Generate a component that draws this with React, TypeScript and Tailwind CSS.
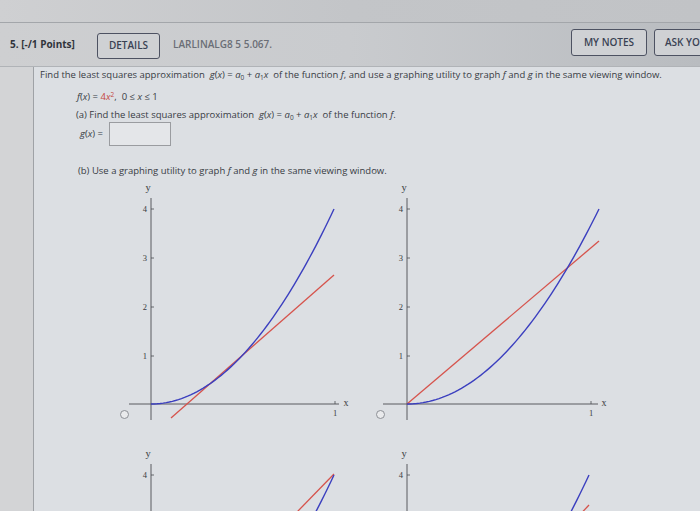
import React from "react";

type GraphProps = {
  x1: number;
  red: [number, number, number, number];
  axisEnd: number;
  axisStart: number;
  oneX: number;
  xLabelX: number;
  full?: boolean;
};

function Graph({ x1, red, axisEnd, axisStart, oneX, xLabelX, full = true }: GraphProps) {
  const pts: string[] = [];
  for (let i = 0; i <= 60; i++) {
    const v = i / 60;
    pts.push(`${(27 + (x1 - 27) * v).toFixed(2)},${(224 - 48.75 * 4 * v * v).toFixed(2)}`);
  }
  const allTicks = [
    { v: 4, y: 29 },
    { v: 3, y: 78 },
    { v: 2, y: 127 },
    { v: 1, y: 176 },
  ];
  const ticks = full ? allTicks : allTicks.slice(0, 1);
  const h = full ? 266 : 65;
  return (
    <div className={full ? "flex items-start w-[256px] h-[266px] shrink-0" : "flex items-start w-[256px] h-[65px] shrink-0"}>
      <div
        className={
          full
            ? "mt-[230px] ml-[6px] w-[9px] h-[9px] rounded-full border border-[#8d9096] bg-[#e9eaec] shrink-0"
            : "ml-[6px] w-[9px] h-[9px] shrink-0"
        }
      />
      <svg width="240" height={h} className="-ml-[5px] shrink-0" viewBox={`0 0 240 ${h}`}>
        <g fontFamily="'Liberation Serif', serif" fill="#3a3c40">
          <text x="24" y="11" fontSize="10.5" textAnchor="middle">y</text>
          {ticks.map((t) => (
            <text key={t.v} x="23" y={t.y + 3} fontSize="8.5" textAnchor="end">
              {t.v}
            </text>
          ))}
          {full && (
            <>
              <text x={oneX} y="236" fontSize="8.5" textAnchor="middle">1</text>
              <text x={xLabelX} y="226" fontSize="10" textAnchor="middle">x</text>
            </>
          )}
        </g>
        <line x1="27" y1="18" x2="27" y2="240" stroke="#4a4c50" strokeWidth="0.9" />
        {ticks.map((t) => (
          <line key={t.v} x1="27" y1={t.y} x2="30" y2={t.y} stroke="#4a4c50" strokeWidth="0.8" />
        ))}
        {full && (
          <>
            <line x1={axisStart} y1="224" x2={axisEnd} y2="224" stroke="#4a4c50" strokeWidth="0.9" />
            <line x1={oneX} y1="221" x2={oneX} y2="224" stroke="#4a4c50" strokeWidth="0.8" />
          </>
        )}
        <line x1={red[0]} y1={red[1]} x2={red[2]} y2={red[3]} stroke="#d6534c" strokeWidth="1.3" />
        <polyline points={pts.join(" ")} fill="none" stroke="#3b3fbf" strokeWidth="1.4" />
      </svg>
    </div>
  );
}

function Btn({ children, extra }: { children: React.ReactNode; extra: string }) {
  return (
    <div
      className={
        "flex items-center border border-[#4d5262] rounded-[3px] bg-[#cfd1d4] text-[#3a4253] font-semibold text-[10px] whitespace-nowrap overflow-hidden shrink-0 " +
        extra
      }
    >
      {children}
    </div>
  );
}

export default function App() {
  return (
    <div className="w-[700px] h-[511px] overflow-hidden bg-[#dcdfe3] font-['Open_Sans',sans-serif] text-[#383c44]">
      <div className="h-[23px] bg-linear-to-r from-[#cfd0d2] via-[#c3c5c8] to-[#c1c3c6] border-b border-[#a3a6aa]" />
      <div className="h-[44px] flex items-center bg-linear-to-r from-[#cecfd1] via-[#c9cbce] to-[#b9bcc0] border-b border-[#b0b3b7]">
        <div className="ml-[10px] w-[87px] font-bold text-[10px] text-[#30343b] whitespace-nowrap">5. [-/1 Points]</div>
        <Btn extra="w-[63px] h-[26px] mt-[2px] justify-center">DETAILS</Btn>
        <div className="ml-[13px] text-[10px] font-semibold text-[#6a6e76] whitespace-nowrap">LARLINALG8 5 5.067.</div>
        <div className="flex-1" />
        <Btn extra="w-[76px] h-[27px] -mt-[5px] justify-center">MY NOTES</Btn>
        <Btn extra="w-[60px] h-[27px] -mt-[5px] ml-[7px] -mr-[14px] justify-start pl-[10px]">ASK YOUR</Btn>
      </div>
      <div className="flex h-[444px]">
        <div className="w-[34px] shrink-0 bg-[#d3d4d6] border-r border-[#9fa2a6]" />
        <div className="flex-1 pl-[6px] pt-[2px] text-[9.5px] leading-[12px]">
          <div className="whitespace-nowrap">
            Find the least squares approximation&nbsp; <i>g</i>(<i>x</i>) = <i>a</i>
            <sub className="text-[6.5px]">0</sub> + <i>a</i>
            <sub className="text-[6.5px]">1</sub>
            <i>x</i>&nbsp; of the function <i>f</i>, and use a graphing utility to graph <i>f</i> and <i>g</i> in the
            same viewing window.
          </div>
          <div className="ml-[37px] mt-[10px] whitespace-nowrap">
            <i>f</i>(<i>x</i>) ={" "}
            <span className="text-[#c4473f]">
              4<i>x</i>
              <sup className="text-[6.5px]">2</sup>
            </span>
            ,&nbsp; 0 ≤ <i>x</i> ≤ 1
          </div>
          <div className="ml-[36px] mt-[6px] whitespace-nowrap">
            (a) Find the least squares approximation&nbsp; <i>g</i>(<i>x</i>) = <i>a</i>
            <sub className="text-[6.5px]">0</sub> + <i>a</i>
            <sub className="text-[6.5px]">1</sub>
            <i>x</i>&nbsp; of the function <i>f</i>.
          </div>
          <div className="ml-[40px] mt-[1px] flex items-center h-[24px]">
            <span className="whitespace-nowrap">
              <i>g</i>(<i>x</i>) =
            </span>
            <div className="ml-[6px] w-[62px] h-[24px] border border-[#9a9ca0] bg-[#e4e6e9]" />
          </div>
          <div className="ml-[38px] mt-[19px] whitespace-nowrap">
            (b) Use a graphing utility to graph <i>f</i> and <i>g</i> in the same viewing window.
          </div>
          <div className="ml-[74px] mt-[3px] flex">
            <Graph x1={210} red={[47, 238, 210, 95]} axisStart={5} axisEnd={215} oneX={211} xLabelX={222} />
            <Graph x1={219} red={[27, 224, 219, 61]} axisStart={3} axisEnd={218} oneX={211} xLabelX={224} />
          </div>
          <div className="ml-[74px] flex">
            <Graph x1={210} red={[150, 89.7, 210, 28]} axisStart={5} axisEnd={215} oneX={211} xLabelX={222} full={false} />
            <Graph x1={209} red={[170, 100.7, 209, 59]} axisStart={3} axisEnd={218} oneX={211} xLabelX={224} full={false} />
          </div>
        </div>
      </div>
    </div>
  );
}
